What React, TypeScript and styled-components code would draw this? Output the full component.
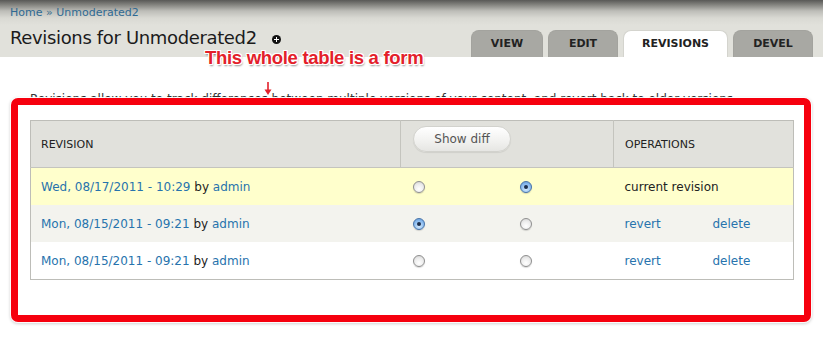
import React from 'react';
import styled, { createGlobalStyle } from 'styled-components';

const GlobalStyle = createGlobalStyle`
	html, body {
		margin: 0;
		padding: 0;
		background: #fff;
	}
	body {
		font-family: 'DejaVu Sans', 'Noto Sans', sans-serif;
		font-size: 12px;
		color: #222;
	}
`;

const Page = styled.div`
	position: relative;
	width: 823px;
	height: 341px;
	overflow: hidden;
	background: #fff;
`;

const Header = styled.div`
	height: 57px;
	display: flex;
	justify-content: space-between;
	align-items: flex-end;
	padding: 0 10px;
	box-sizing: border-box;
	background: linear-gradient(#585856 0, #858581 5px, #bdbdb8 11px, #d9d9d3 18px, #e1e1db 25px);
`;

const TitleBlock = styled.div`
	align-self: stretch;
	display: flex;
	flex-direction: column;
`;

const Breadcrumb = styled.div`
	margin-top: 6px;
	font-size: 11px;
	line-height: 14px;
	color: #3d6f8f;
`;

const CrumbLink = styled.a`
	color: #2f6a93;
	text-decoration: none;
`;

const Title = styled.h1`
	margin: 6px 0 0;
	display: flex;
	align-items: center;
	gap: 15px;
	font-weight: normal;
	font-size: 18px;
	letter-spacing: -0.35px;
	line-height: 24px;
	color: #1b1b1b;
`;

const PlusIcon = styled.span`
	position: relative;
	width: 9px;
	height: 9px;
	border-radius: 50%;
	background: #111;
	margin-top: 3px;

	&::before,
	&::after {
		content: '';
		position: absolute;
		background: #fff;
	}
	&::before {
		left: 2px;
		top: 4px;
		width: 5px;
		height: 1px;
	}
	&::after {
		left: 4px;
		top: 2px;
		width: 1px;
		height: 5px;
	}
`;

const Tabs = styled.div`
	display: flex;
	gap: 5px;
	align-items: flex-end;
`;

const Tab = styled.a<{ $active?: boolean; $width: number }>`
	width: ${(p) => p.$width}px;
	height: 27px;
	box-sizing: border-box;
	display: flex;
	align-items: center;
	justify-content: center;
	padding-bottom: 1px;
	border-radius: 8px 8px 0 0;
	font-size: 11px;
	font-weight: bold;
	color: #222;
	text-decoration: none;
	background: ${(p) => (p.$active ? '#fff' : '#a8a8a3')};
	border: 1px solid ${(p) => (p.$active ? '#d4d4ce' : '#a3a39e')};
	border-bottom: none;
`;

const Main = styled.div`
	padding: 0 30px;
`;

const Help = styled.p`
	margin: 35px 0 13px;
	font-size: 12px;
	line-height: 15px;
	color: #333;
	white-space: nowrap;
`;

const RevisionTable = styled.table`
	width: 763px;
	border-collapse: collapse;
	border: 1px solid #bdbdb8;
	table-layout: fixed;
`;

const HeadCell = styled.th<{ $pad?: number }>`
	height: 46px;
	padding: 0 0 0 ${(p) => p.$pad ?? 10}px;
	background: #e1e1dc;
	border-left: 1px solid #c4c4be;
	border-bottom: 1px solid #c4c4be;
	text-align: left;
	font-weight: normal;
	font-size: 11px;
	color: #222;
	vertical-align: middle;

	&:first-child {
		border-left: none;
	}
`;

const Row = styled.tr<{ $bg: string }>`
	background: ${(p) => p.$bg};
`;

const Cell = styled.td<{ $pad?: number }>`
	height: 37px;
	padding: 0 0 0 ${(p) => p.$pad ?? 10}px;
	vertical-align: middle;
	font-size: 12px;
	white-space: nowrap;
`;

const Link = styled.a`
	color: #2773ad;
	text-decoration: none;
`;

const DiffButton = styled.button`
	display: block;
	width: 98px;
	height: 26px;
	margin-top: -10px;
	border-radius: 13px;
	border: 1px solid #d2d2cd;
	background: linear-gradient(#ffffff, #f1f1ef 60%, #e6e6e3);
	box-shadow: 0 1px 1px rgba(0, 0, 0, 0.08);
	font-family: inherit;
	font-size: 12px;
	color: #555;
	cursor: pointer;
`;

const Radio = styled.span<{ $checked?: boolean }>`
	display: inline-block;
	position: relative;
	width: 12px;
	height: 12px;
	box-sizing: border-box;
	border-radius: 50%;
	vertical-align: middle;
	border: 1px solid ${(p) => (p.$checked ? '#4a74a8' : '#8f8f8f')};
	background: ${(p) =>
		p.$checked
			? 'radial-gradient(circle at 50% 70%, #d8ecfd 0, #8dbdf0 55%, #5a95d6 100%)'
			: 'radial-gradient(circle at 50% 70%, #ffffff 0, #ececec 55%, #cfcfcf 100%)'};
	box-shadow: 0 1px 1px rgba(0, 0, 0, 0.15);

	&::after {
		content: '';
		display: ${(p) => (p.$checked ? 'block' : 'none')};
		position: absolute;
		left: 3px;
		top: 3px;
		width: 4px;
		height: 4px;
		border-radius: 50%;
		background: #1c2f4d;
	}
`;

const Callout = styled.div`
	position: absolute;
	z-index: 3;
	left: 205px;
	top: 47px;
	font-family: 'Liberation Sans', Arial, sans-serif;
	font-weight: bold;
	font-size: 18.5px;
	letter-spacing: -0.3px;
	color: #e3202a;
	text-shadow: 1px 0 0 #fff, -1px 0 0 #fff, 0 1px 0 #fff, 0 -1px 0 #fff, 1px 1px 0 #fff,
		-1px -1px 0 #fff, 1px -1px 0 #fff, -1px 1px 0 #fff, 1px 2px 2px rgba(0, 0, 0, 0.45);
`;

const Arrow = styled.svg`
	position: absolute;
	z-index: 3;
	left: 264px;
	top: 82px;
`;

/* annotation rectangle: red stroke with a thin white halo on both sides */
const FormFrame = styled.div`
	position: absolute;
	z-index: 2;
	left: 11px;
	top: 98px;
	width: 800px;
	height: 224px;
	box-sizing: border-box;
	border: 7px solid #f6000e;
	border-radius: 7px;
	box-shadow: 0 0 0 1px rgba(255, 255, 255, 0.9), 0 1px 3px 1px rgba(0, 0, 0, 0.18),
		inset 0 0 0 3px #fff;
	pointer-events: none;
`;

const TABS = [
	{ label: 'VIEW', width: 72 },
	{ label: 'EDIT', width: 70 },
	{ label: 'REVISIONS', width: 105, active: true },
	{ label: 'DEVEL', width: 80 }
];

const REVISIONS = [
	{ date: 'Wed, 08/17/2011 - 10:29', left: false, right: true, current: true, bg: '#ffffcc' },
	{ date: 'Mon, 08/15/2011 - 09:21', left: true, right: false, current: false, bg: '#f3f3ee' },
	{ date: 'Mon, 08/15/2011 - 09:21', left: false, right: false, current: false, bg: '#ffffff' }
];

const App: React.FC = () => {
	return (
		<Page>
			<GlobalStyle />
			<Header>
				<TitleBlock>
					<Breadcrumb>
						<CrumbLink href="#">Home</CrumbLink> » <CrumbLink href="#">Unmoderated2</CrumbLink>
					</Breadcrumb>
					<Title>
						Revisions for Unmoderated2
						<PlusIcon />
					</Title>
				</TitleBlock>
				<Tabs>
					{TABS.map((tab) => (
						<Tab key={tab.label} href="#" $width={tab.width} $active={tab.active}>
							{tab.label}
						</Tab>
					))}
				</Tabs>
			</Header>

			<Main>
				<Help>
					Revisions allow you to track differences between multiple versions of your content, and revert back to older versions.
				</Help>

				<RevisionTable>
					<colgroup>
						<col style={{ width: 370 }} />
						<col style={{ width: 107 }} />
						<col style={{ width: 106 }} />
						<col style={{ width: 88 }} />
						<col style={{ width: 92 }} />
					</colgroup>
					<thead>
						<tr>
							<HeadCell>REVISION</HeadCell>
							<HeadCell colSpan={2} $pad={12}>
								<DiffButton type="button">Show diff</DiffButton>
							</HeadCell>
							<HeadCell colSpan={2} $pad={11}>
								OPERATIONS
							</HeadCell>
						</tr>
					</thead>
					<tbody>
						{REVISIONS.map((rev, i) => (
							<Row key={i} $bg={rev.bg}>
								<Cell>
									<Link href="#">{rev.date}</Link> by <Link href="#">admin</Link>
								</Cell>
								<Cell $pad={12}>
									<Radio $checked={rev.left} />
								</Cell>
								<Cell $pad={12}>
									<Radio $checked={rev.right} />
								</Cell>
								{rev.current ? (
									<Cell colSpan={2} $pad={11}>
										current revision
									</Cell>
								) : (
									<>
										<Cell $pad={11}>
											<Link href="#">revert</Link>
										</Cell>
										<Cell $pad={11}>
											<Link href="#">delete</Link>
										</Cell>
									</>
								)}
							</Row>
						))}
					</tbody>
				</RevisionTable>
			</Main>

			<Callout>This whole table is a form</Callout>
			<Arrow width="8" height="13" viewBox="0 0 8 13">
				<line x1="4" y1="0" x2="4" y2="9" stroke="#e3202a" strokeWidth="1.6" />
				<polygon points="0.5,7.5 7.5,7.5 4,13" fill="#e3202a" />
			</Arrow>
			<FormFrame />
		</Page>
	);
};

export default App;
